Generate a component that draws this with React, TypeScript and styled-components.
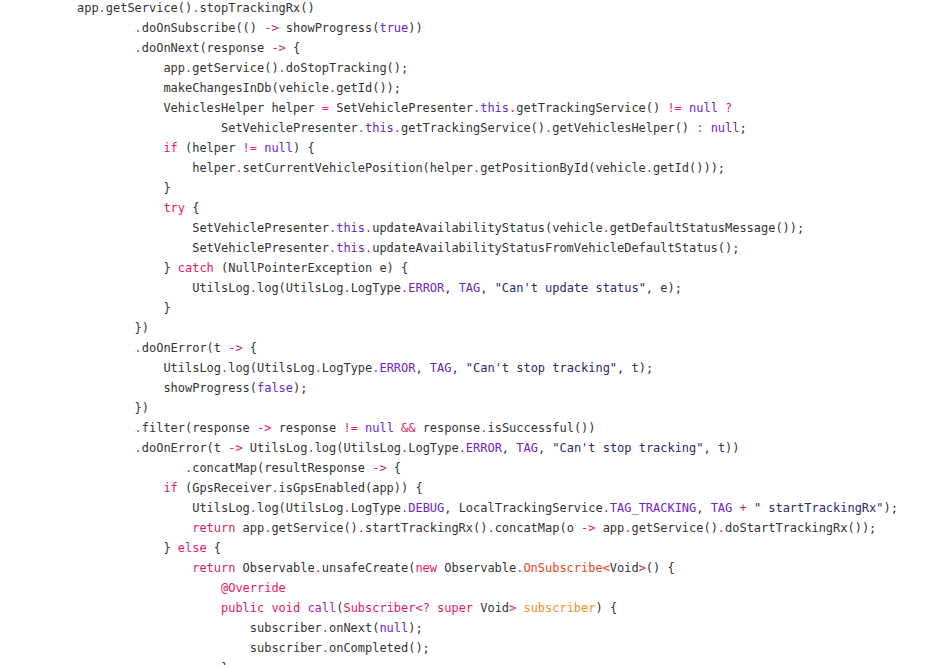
import React from "react";
import styled, { createGlobalStyle } from "styled-components";

const GlobalStyle = createGlobalStyle`
  html, body { margin: 0; padding: 0; background: #ffffff; }
  body { overflow: hidden; }
`;

const colors = {
  text: "#333333",
  keyword: "#e5195f",
  literal: "#6d25c4",
  method: "#a324c9",
  param: "#f3912c",
  type: "#f04520",
  string: "#2a2a66",
};

type Kind = keyof typeof colors;

const CodeBlock = styled.pre`
  margin: -2px 0 0 0;
  padding: 0 0 0 77px;
  font-family: "DejaVu Sans Mono", "Liberation Mono", monospace;
  font-size: 12px;
  letter-spacing: -0.025px;
  line-height: 20px;
  color: ${colors.text};
  background: #ffffff;
`;

const Line = styled.div<{ $indent: number }>`
  height: 20px;
  white-space: pre;
  padding-left: ${(p) => p.$indent * 7.2}px;
`;

const Tok = styled.span<{ $kind: Kind }>`
  color: ${(p) => colors[p.$kind]};
`;

const KEYWORDS = new Set(["if", "try", "catch", "return", "new", "public", "void", "super", "else"]);
const LITERALS = new Set(["true", "false", "null", "this", "ERROR", "TAG", "DEBUG", "TAG_TRACKING"]);

function tokenize(src: string): { t: string; k: Kind }[] {
  const re = /("(?:[^"\\]|\\.)*")|(@\w+)|(\w+)|(->|!=|&&|[.?:=+<>])|(\s+)|(.)/g;
  const out: { t: string; k: Kind }[] = [];
  let m: RegExpExecArray | null;
  while ((m = re.exec(src))) {
    const t = m[0];
    let k: Kind = "text";
    if (m[1]) k = "string";
    else if (m[2]) k = "keyword";
    else if (m[3]) {
      const rest = src.slice(re.lastIndex);
      if (KEYWORDS.has(t)) k = "keyword";
      else if (LITERALS.has(t)) k = "literal";
      else if (t === "call") k = "method";
      else if (t === "Subscriber") k = "keyword";
      else if (t === "OnSubscribe") k = "type";
      else if (t === "subscriber" && rest.startsWith(")")) k = "param";
    } else if (m[4]) {
      k = "keyword";
      const prev = out[out.length - 1];
      if (t === "<" && prev && prev.t === "OnSubscribe") k = "type";
    }
    out.push({ t, k });
  }
  return out;
}

const LINES: [number, string][] = [
  [0, "app.getService().stopTrackingRx()"],
  [8, ".doOnSubscribe(() -> showProgress(true))"],
  [8, ".doOnNext(response -> {"],
  [12, "app.getService().doStopTracking();"],
  [12, "makeChangesInDb(vehicle.getId());"],
  [12, "VehiclesHelper helper = SetVehiclePresenter.this.getTrackingService() != null ?"],
  [20, "SetVehiclePresenter.this.getTrackingService().getVehiclesHelper() : null;"],
  [12, "if (helper != null) {"],
  [16, "helper.setCurrentVehiclePosition(helper.getPositionById(vehicle.getId()));"],
  [12, "}"],
  [12, "try {"],
  [16, "SetVehiclePresenter.this.updateAvailabilityStatus(vehicle.getDefaultStatusMessage());"],
  [16, "SetVehiclePresenter.this.updateAvailabilityStatusFromVehicleDefaultStatus();"],
  [12, "} catch (NullPointerException e) {"],
  [16, 'UtilsLog.log(UtilsLog.LogType.ERROR, TAG, "Can\'t update status", e);'],
  [12, "}"],
  [8, "})"],
  [8, ".doOnError(t -> {"],
  [12, 'UtilsLog.log(UtilsLog.LogType.ERROR, TAG, "Can\'t stop tracking", t);'],
  [12, "showProgress(false);"],
  [8, "})"],
  [8, ".filter(response -> response != null && response.isSuccessful())"],
  [8, '.doOnError(t -> UtilsLog.log(UtilsLog.LogType.ERROR, TAG, "Can\'t stop tracking", t))'],
  [15, ".concatMap(resultResponse -> {"],
  [12, "if (GpsReceiver.isGpsEnabled(app)) {"],
  [16, 'UtilsLog.log(UtilsLog.LogType.DEBUG, LocalTrackingService.TAG_TRACKING, TAG + " startTrackingRx");'],
  [16, "return app.getService().startTrackingRx().concatMap(o -> app.getService().doStartTrackingRx());"],
  [12, "} else {"],
  [16, "return Observable.unsafeCreate(new Observable.OnSubscribe<Void>() {"],
  [20, "@Override"],
  [20, "public void call(Subscriber<? super Void> subscriber) {"],
  [24, "subscriber.onNext(null);"],
  [24, "subscriber.onCompleted();"],
  [20, "}"],
];

export default function App() {
  return (
    <>
      <GlobalStyle />
      <CodeBlock>
        {LINES.map(([indent, src], i) => (
          <Line key={i} $indent={indent}>
            {tokenize(src).map((tok, j) =>
              tok.k === "text" ? (
                <React.Fragment key={j}>{tok.t}</React.Fragment>
              ) : (
                <Tok key={j} $kind={tok.k}>
                  {tok.t}
                </Tok>
              )
            )}
          </Line>
        ))}
      </CodeBlock>
    </>
  );
}
